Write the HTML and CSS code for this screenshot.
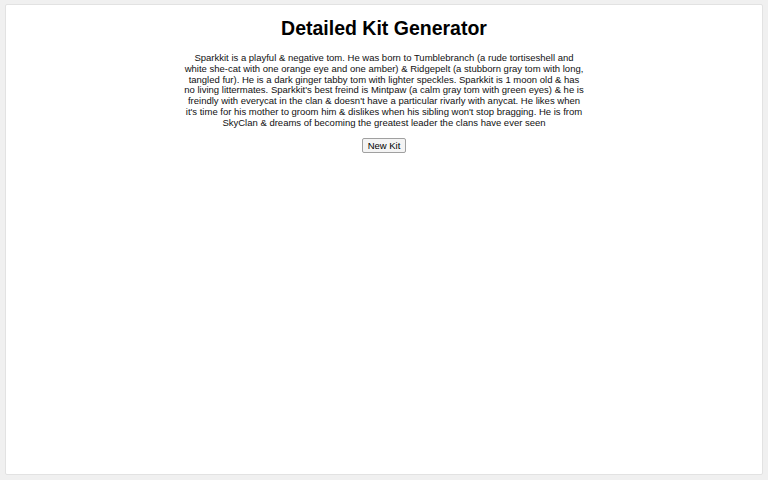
FILE: index.html
```html
<!DOCTYPE html>
<html lang="en">

<head>
    <meta charset="UTF-8">
    <meta name="viewport" content="width=device-width, initial-scale=1.0">
    <title>Detailed Kit Generator</title>
    <link rel="stylesheet" href="styles.css">
</head>

<body>
    <div class="container">
        <h1>Detailed Kit Generator</h1>
        <p id="kitText" class="kit-text">Sparkkit is a playful &amp; negative tom. He was born to Tumblebranch (a rude tortiseshell and white she-cat with one orange eye and one amber) &amp; Ridgepelt (a stubborn gray tom with long, tangled fur). He is a dark ginger tabby tom with lighter speckles. Sparkkit is 1 moon old &amp; has no living littermates. Sparkkit's best freind is Mintpaw (a calm gray tom with green eyes) &amp; he is freindly with everycat in the clan &amp; doesn't have a particular rivarly with anycat. He likes when it's time for his mother to groom him &amp; dislikes when his sibling won't stop bragging. He is from SkyClan &amp; dreams of becoming the greatest leader the clans have ever seen</p>
        <button id="newKit">New Kit</button>
    </div>
</body>

</html>
```

FILE: styles.css
```css
html, body {
    margin: 0;
    height: 100%;
}

body {
    font-family: "Liberation Sans", Arial, sans-serif;
    background-color: #f0f0f0;
    text-align: center;
    padding: 4px 5px 5px 5px;
    box-sizing: border-box;
}

.container {
    background-color: #fff;
    border: 1px solid #e2e2e2;
    border-radius: 2px;
    height: 100%;
    box-sizing: border-box;
    padding: 12px 20px;
}

h1 {
    font-size: 19.5px;
    margin: 0 0 13px 0;
}

.kit-text {
    font-size: 9.5px;
    line-height: 10.8px;
    max-width: 402px;
    margin: 0 auto 6px auto;
    color: #111;
}

button {
    font-family: "Liberation Sans", Arial, sans-serif;
    font-size: 9.5px;
    padding: 1px 5px;
    background-color: #f4f4f4;
    border: 1px solid #a0a0a0;
    border-radius: 2px;
    color: #000;
}
```
